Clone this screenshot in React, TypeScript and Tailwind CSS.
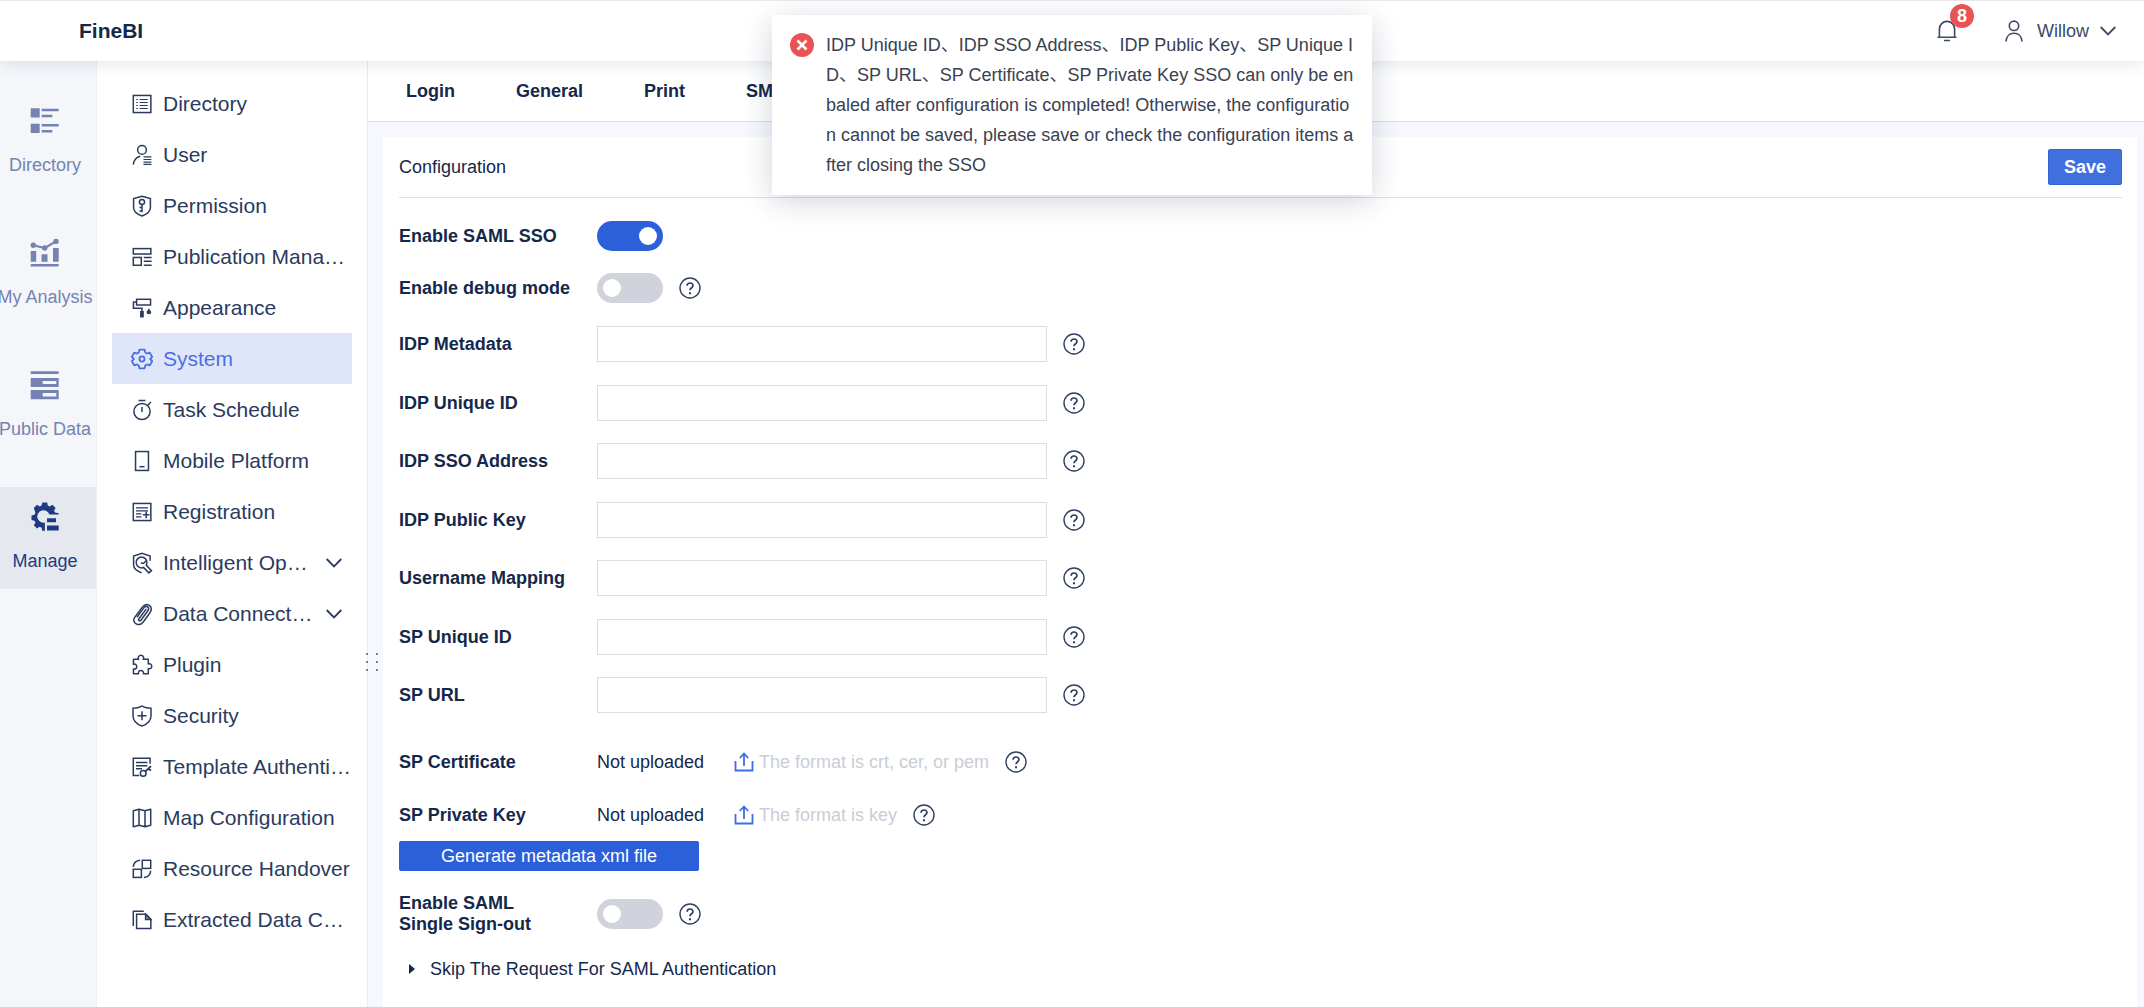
import { useState } from 'react';
import type { ReactNode } from 'react';

interface MenuEntry {
  label: string;
  icon: ReactNode;
  active?: boolean;
  expandable?: boolean;
}

// Outline icons share a 16 unit grid
const LineIcon = ({ children }: { children: ReactNode }) => (
  <svg
    className="w-6 h-6 shrink-0"
    viewBox="0 0 16 16"
    fill="none"
    stroke="currentColor"
    strokeWidth="1"
    aria-hidden="true"
  >
    {children}
  </svg>
);

const ChevronDown = () => (
  <svg className="w-4 h-4 shrink-0" viewBox="0 0 16 16" fill="none" stroke="currentColor" strokeWidth="1.8" aria-hidden="true">
    <path d="M0.7 4 8 11.5 15.3 4" />
  </svg>
);

const menu: MenuEntry[] = [
  {
    label: 'Directory',
    icon: (
      <>
        <rect x="2.2" y="2.3" width="11.7" height="11.4" />
        <path d="M6.4 5h5.4M6.4 7h5.4M6.4 9h5.4M6.4 11h5.4" strokeWidth="0.8" />
        <path d="M4.2 5h1M4.2 7h1M4.2 9h1M4.2 11h1" strokeWidth="0.8" />
      </>
    ),
  },
  {
    label: 'User',
    icon: (
      <>
        <circle cx="8" cy="4.6" r="2.9" />
        <path d="M2.2 14.4C2.6 11.6 4 9.5 6.8 8.9" />
        <path d="M9 9.3h5.3M9 11h5.3M9 12.7h5.3M9 14.2h5.3" strokeWidth="0.8" />
      </>
    ),
  },
  {
    label: 'Permission',
    icon: (
      <>
        <path d="M8 1.5 13.6 3v6.2c0 2.6-2.4 4.3-5.6 5.5-3.2-1.2-5.600-2.900-5.600-5.500V3z" />
        <circle cx="8" cy="5.3" r="1.7" />
        <path d="M8 7v5.2M8 9H6.3M8 11.400H6.300" />
      </>
    ),
  },
  {
    label: 'Publication Mana…',
    icon: (
      <>
        <rect x="2.2" y="2.4" width="11.7" height="3.6" />
        <rect x="2.2" y="8.3" width="5.3" height="5.2" />
        <path d="M9.2 8.3h5.2M9.2 10.9h5.2M9.2 13.500h5.2" />
      </>
    ),
  },
  {
    label: 'Appearance',
    icon: (
      <>
        <rect x="4.4" y="2.2" width="9.3" height="3.8" />
        <path d="M4.4 4H2.3v4.200H8v2" />
        <path d="M6.700 10h2.500v4.400H6.700zM12.600 8.200l1.600 2.400a1.600 1.600 0 1 1-3.200 0z" fill="currentColor" stroke="none" />
      </>
    ),
  },
  {
    label: 'System',
    active: true,
    icon: (
      <>
        <path
          strokeWidth="1.2"
          strokeLinejoin="round"
          d="M6.3 1.8h3.4l.5 1.900 1.100.65 1.900-.55 1.600 2.800L13.400 8l1.400 1.400-1.600 2.800-1.900-.55-1.100.65-.5 1.900H6.300l-.5-1.900-1.100-.65-1.900.55-1.600-2.800L2.600 8 1.200 6.600l1.600-2.800 1.900.55 1.100-.65z"
        />
        <circle cx="8" cy="8" r="1.7" strokeWidth="1.2" />
      </>
    ),
  },
  {
    label: 'Task Schedule',
    icon: (
      <>
        <circle cx="8" cy="9" r="5.4" />
        <path d="M8 6v3.400M5.700 1.700h4.600M12 4.800l1.900-2.100" />
      </>
    ),
  },
  {
    label: 'Mobile Platform',
    icon: (
      <>
        <rect x="3.7" y="1.7" width="8.6" height="12.600" />
        <path d="M6.300 11.800h3.400" />
      </>
    ),
  },
  {
    label: 'Registration',
    icon: (
      <>
        <rect x="2.2" y="2.300" width="11.7" height="11.400" />
        <path d="M4 5.200h8M4 7.200h8M4 9.200h3.600M4 11.200h3.600" strokeWidth="0.8" />
        <path d="M8.600 9.900h4.400M10.800 7.700v4.400" />
      </>
    ),
  },
  {
    label: 'Intelligent Op…',
    expandable: true,
    icon: (
      <>
        <path d="M13.400 6.500V3.400L8 1.600 2.400 3.400v6c0 2.400 2.200 4 5.400 5.200" />
        <path d="M11 6.200A3.600 3.600 0 1 0 9 11l3.600 3.600 1.700-1.500-3.500-3.700a3.700 3.700 0 0 0 .2-3.200L9 8.300 7.200 7.900" />
      </>
    ),
  },
  {
    label: 'Data Connect…',
    expandable: true,
    icon: (
      <path
        strokeLinecap="round"
        d="M10.600 4.900 6 11.200c-.8 1.100.5 2 1.300 1l4.600-6.400c1.500-2.100-1.100-4-2.700-1.900L4.900 9.800M12.600 8.200l-3.900 5.300c-2.500 3.200-7.800.6-5.700-3.100l5.200-7C11.200-.3 15.700 3 13.500 6.800z"
      />
    ),
  },
  {
    label: 'Plugin',
    icon: (
      <path
        strokeLinejoin="round"
        d="M2.300 4.200h3.500c-.9-1.300.1-2.700 1.500-2.700s2.400 1.400 1.500 2.700h3.400v3.200c1.200-.5 2.300.2 2.300 1.500s-1.100 2-2.300 1.500v3.400H8.900c.4-1.200-.4-2.200-1.600-2.200s-2 1-1.600 2.200H2.300v-3.200c1.400.4 2.200-.4 2.200-1.500s-.9-2-2.200-1.600z"
      />
    ),
  },
  {
    label: 'Security',
    icon: (
      <>
        <path d="M8 1.400c1.900 1 3.900 1.400 6 1.400v5c0 3.400-2.400 5.600-6 6.900-3.600-1.300-6-3.500-6-6.900v-5c2.100 0 4.100-.4 6-1.400z" />
        <path d="M8 4.800v6M5 7.800h6" />
      </>
    ),
  },
  {
    label: 'Template Authenti…',
    icon: (
      <>
        <path d="M13.400 5.800V2.200H2.200v11.400h4M4 5h7.600M4 7.100h7.600M4 9.200h4" />
        <circle cx="8.800" cy="12.300" r="1.900" />
        <path d="M10.200 11l3.800-3.600M12.200 9.200l1.800 1.200" strokeWidth="1.2" />
      </>
    ),
  },
  {
    label: 'Map Configuration',
    icon: (
      <path
        strokeLinejoin="round"
        d="M2.200 3.200 6 2.200l4 1 3.800-1v10.600l-3.800 1-4-1-3.800 1zM6 2.200v10.600M10 3.200v10.600"
      />
    ),
  },
  {
    label: 'Resource Handover',
    icon: (
      <>
        <rect x="8.200" y="2.200" width="5.600" height="5.400" />
        <rect x="2.200" y="8.200" width="5.400" height="5.400" />
        <path d="M2.200 6.600c.2-2.400 1.900-4.200 4.500-4.400M13.800 9.200c-.2 2.400-1.900 4.200-4.500 4.400" />
      </>
    ),
  },
  {
    label: 'Extracted Data C…',
    icon: (
      <>
        <path d="M2.200 12V2.200h7" />
        <path d="M4.400 4.200h6.200L13.900 7.500v6.200H4.400z" />
        <path d="M10.400 4.200v3.500h3.500z" fill="currentColor" fillOpacity="0.5" />
      </>
    ),
  },
];

const rail = [
  {
    label: 'Directory',
    icon: (
      <path d="M.7 2.300h9v9.200h-9zM.7 17.700h9v9.200h-9zM11.700 2.700h17v2.600h-17zM11.700 8.700h10.600v2.600H11.700zM11.700 18h17v2.600h-17zM11.700 24h10.600v2.600H11.700z" />
    ),
  },
  {
    label: 'My Analysis',
    icon: (
      <>
        <path d="M.7 13h5.500v10.700H.7zM11.500 16.300h6v7.400h-6zM23 10h5.700v13.700H23zM.7 25.900h28v2.600H.7z" />
        <circle cx="3.300" cy="7.300" r="2.700" />
        <circle cx="14.700" cy="10" r="2.700" />
        <circle cx="26" cy="3.400" r="2.700" />
        <path d="M3.300 7.300 14.700 10 26 3.400" fill="none" stroke="currentColor" strokeWidth="2.200" />
      </>
    ),
  },
  {
    label: 'Public Data',
    icon: (
      <path
        fillRule="evenodd"
        d="M.7 1.300h28v2.600H.7zM.7 7.900h28v9.200H.7zM12.700 10.900v3.200h13.600v-3.200zM.7 20h28v9.300H.7zM12.700 23v3.600h13.600V23z"
      />
    ),
  },
  {
    label: 'Manage',
    active: true,
    icon: (
      <path d="M12.400.5h4.800l.6 3 2 .9 2.600-1.700 3.200 3.300-1.500 2.500.9 2 3.700.8v1.300h-9.300A6.200 6.200 0 1 0 14.900 20.500v8.200h-2.700l-.6-3-2-.9-2.600 1.700-3.200-3.200 1.600-2.600-.9-2-3-.6v-4.700l3-.6.9-2L3.800 6 7.100 2.700l2.500 1.700 2-.9zM17 16.300h9v4h-9zM17 23.500h11.700v5H17z" />
    ),
  },
];

const fields = [
  { id: 'idp-metadata', label: 'IDP Metadata' },
  { id: 'idp-id', label: 'IDP Unique ID' },
  { id: 'idp-sso', label: 'IDP SSO Address' },
  { id: 'idp-key', label: 'IDP Public Key' },
  { id: 'username', label: 'Username Mapping' },
  { id: 'sp-id', label: 'SP Unique ID' },
  { id: 'sp-url', label: 'SP URL' },
];

const labelClass = 'w-[198px] shrink-0 font-bold';

const Help = () => (
  <button type="button" aria-label="Help" className="ml-4 shrink-0 text-[#2f4060]">
    <svg className="w-[22px] h-[22px]" viewBox="0 0 22 22" fill="none" stroke="currentColor" strokeWidth="1.4" aria-hidden="true">
      <circle cx="11" cy="11" r="10" />
      <path d="M8.100 8.800c0-3.700 5.900-3.700 5.900-.2 0 2.100-3 2.300-3 4.700" strokeWidth="1.7" />
      <path d="M10 15.200h2v2h-2z" fill="currentColor" stroke="none" />
    </svg>
  </button>
);

const Switch = ({ id, initial = false }: { id: string; initial?: boolean }) => {
  const [on, setOn] = useState(initial);
  return (
    <input
      id={id}
      type="checkbox"
      role="switch"
      checked={on}
      onChange={(e) => setOn(e.target.checked)}
      className="appearance-none flex items-center w-[66px] h-[30px] shrink-0 px-1.5 rounded-full bg-[#d0d3db] checked:bg-[#2c60db] checked:justify-end before:block before:w-[18px] before:h-[18px] before:rounded-full before:bg-white"
    />
  );
};

const UploadRow = ({ label, hint }: { label: string; hint: string }) => (
  <div className="flex items-center h-[30px]">
    <span className={labelClass}>{label}</span>
    <span className="w-[136px] shrink-0">Not uploaded</span>
    <button type="button" className="flex items-center gap-1 text-[#c9cdd6]">
      <svg className="w-[22px] h-[22px] text-[#3f6fe0]" viewBox="0 0 22 22" fill="none" stroke="currentColor" strokeWidth="1.8" aria-hidden="true">
        <path d="M2.500 10v9.500h17V10M11 15V3M6.800 7 11 2.600 15.200 7" />
      </svg>
      {hint}
    </button>
    <Help />
  </div>
);

export default function App() {
  const [open, setOpen] = useState(false);

  return (
    <div className='relative min-h-screen flex flex-col overflow-hidden bg-[#f7f8fd] text-lg leading-7 text-[#14284b] font-["Liberation_Sans","Noto_Sans_CJK_SC",sans-serif]'>
      {/* Header */}
      <header className="relative z-10 flex items-center justify-between h-[61px] pl-[79px] pr-7 border-t border-[#e9e9eb] bg-white shadow-[0_2px_16px_rgba(20,40,80,0.12)]">
        <h1 className="text-[21px] font-bold">FineBI</h1>
        <div className="flex items-center text-[#3c4a66]">
          <button type="button" aria-label="Notifications" className="relative mr-[45px]">
            <svg className="w-[22px] h-[22px]" viewBox="0 0 22 22" fill="none" stroke="currentColor" strokeWidth="1.6" aria-hidden="true">
              <path d="M3.400 17.200V9a7.600 7.600 0 0 1 15.200 0v8.200M1.500 17.200h19M8 20.500h6" />
            </svg>
            <span className="absolute -top-4 left-[14px] w-6 h-6 rounded-full bg-[#e95354] text-white text-lg leading-6 font-bold text-center">8</span>
          </button>
          <button type="button" className="flex items-center">
            <svg className="w-[22px] h-[22px] mr-3" viewBox="0 0 22 22" fill="none" stroke="currentColor" strokeWidth="1.6" aria-hidden="true">
              <circle cx="11" cy="5.800" r="4.700" />
              <path d="M3 21.500c.3-5 3.400-8.200 8-8.200s7.700 3.200 8 8.200" />
            </svg>
            <span className="mr-[11px]">Willow</span>
            <ChevronDown />
          </button>
        </div>
      </header>

      <div className="flex flex-1">
        {/* Main navigation */}
        <nav className="flex flex-col gap-[30px] w-[97px] shrink-0 pt-[30px] bg-[#f4f6fa] border-r border-[#eceef3]">
          {rail.map((item) => (
            <a
              key={item.label}
              href="#"
              className={`flex flex-col items-center gap-[15px] h-[102px] pt-[15px] pr-[6px] whitespace-nowrap ${
                item.active ? 'bg-[#e6e8f0] text-[#1f3a80]' : 'text-[#7583b3]'
              }`}
            >
              <svg className="w-[30px] h-[30px] shrink-0" viewBox="0 0 30 30" fill="currentColor" aria-hidden="true">
                {item.icon}
              </svg>
              {item.label}
            </a>
          ))}
        </nav>

        {/* Manage menu */}
        <aside className="relative w-[271px] shrink-0 pt-[17px] px-[15px] bg-white border-r border-[#e9ebf1]">
          {menu.map((item) => (
            <a
              key={item.label}
              href="#"
              className={`flex items-center h-[51px] pl-[18px] gap-[9px] pr-[10px] text-[21px] whitespace-nowrap ${
                item.active ? 'bg-[#e0e6fa] text-[#4a6fe3]' : 'text-[#2b3b5e]'
              }`}
            >
              <LineIcon>{item.icon}</LineIcon>
              <span className="flex-1">{item.label}</span>
              {item.expandable && <ChevronDown />}
            </a>
          ))}
          {/* Resize grip */}
          <div className="absolute -right-[11px] top-[592px] grid grid-cols-2 gap-x-2 gap-y-[6px]">
            {[0, 1, 2, 3, 4, 5].map((dot) => (
              <span key={dot} className="w-[2px] h-[2px] bg-[#7480a8]" />
            ))}
          </div>
        </aside>

        <main className="flex flex-col flex-1 min-w-0">
          <div className="flex items-center gap-[61px] h-[61px] pl-[38px] bg-white border-b border-[#dfe0e7] font-bold">
            <a href="#">Login</a>
            <a href="#">General</a>
            <a href="#">Print</a>
            <a href="#">SMS</a>
          </div>

          <section className="flex-1 mt-[15px] ml-[15px] mr-[7px] pl-4 pr-[15px] bg-white">
            <div className="flex items-center justify-between h-[61px] border-b border-[#dfe0e7]">
              <h2>Configuration</h2>
              <button type="button" className="w-[74px] h-9 rounded-xs border border-[#3364da] bg-[#416fdd] text-white font-bold">
                Save
              </button>
            </div>

            <form onSubmit={(e) => e.preventDefault()}>
              <div className="flex items-center h-[30px] mt-[23px]">
                <label htmlFor="sso" className={labelClass}>Enable SAML SSO</label>
                <Switch id="sso" initial />
              </div>
              <div className="flex items-center h-[30px] mt-[22px]">
                <label htmlFor="debug" className={labelClass}>Enable debug mode</label>
                <Switch id="debug" />
                <Help />
              </div>

              <div className="flex flex-col justify-between h-[387px] mt-[23px]">
                {fields.map((field) => (
                  <div key={field.id} className="flex items-center">
                    <label htmlFor={field.id} className={labelClass}>{field.label}</label>
                    <input id={field.id} type="text" className="w-[450px] h-9 px-2 border border-[#dcdee5] bg-white" />
                    <Help />
                  </div>
                ))}
              </div>

              <div className="flex flex-col gap-[23px] mt-[34px]">
                <UploadRow label="SP Certificate" hint="The format is crt, cer, or pem" />
                <UploadRow label="SP Private Key" hint="The format is key" />
              </div>

              <button type="button" className="block w-[300px] h-[30px] mt-[11px] rounded-xs bg-[#2c60db] text-white">
                Generate metadata xml file
              </button>

              <div className="flex items-center mt-[22px]">
                <label htmlFor="slo" className={`${labelClass} leading-[21px]`}>
                  Enable SAML
                  <br />
                  Single Sign-out
                </label>
                <Switch id="slo" />
                <Help />
              </div>

              <button
                type="button"
                aria-expanded={open}
                onClick={() => setOpen(!open)}
                className="flex items-center gap-[15px] h-[30px] mt-[19px] pl-[10px]"
              >
                <svg className="w-[6px] h-[10px]" viewBox="0 0 6 10" fill="currentColor" aria-hidden="true">
                  <path d="M0 0 6 5 0 10z" />
                </svg>
                Skip The Request For SAML Authentication
              </button>
            </form>
          </section>
        </main>
      </div>

      {/* Error toast */}
      <div role="alert" className="absolute z-20 top-[15px] left-1/2 -translate-x-1/2 flex gap-3 w-[600px] px-[18px] py-[15px] rounded-xs bg-white shadow-[0_6px_30px_rgba(20,40,80,0.2)]">
        <svg className="w-6 h-6 mt-[3px] shrink-0" viewBox="0 0 24 24" aria-hidden="true">
          <circle cx="12" cy="12" r="12" fill="#e95354" />
          <path d="M7.500 7.500l9 9M16.500 7.500l-9 9" stroke="#fff" strokeWidth="2.600" />
        </svg>
        <p className="flex-1 leading-[30px] break-all text-[#3a4152]">
          IDP Unique ID、IDP SSO Address、IDP Public Key、SP Unique ID、SP URL、SP Certificate、SP Private Key SSO can only be enbaled after configuration is completed! Otherwise, the configuration cannot be saved, please save or check the configuration items after closing the SSO
        </p>
      </div>
    </div>
  );
}
